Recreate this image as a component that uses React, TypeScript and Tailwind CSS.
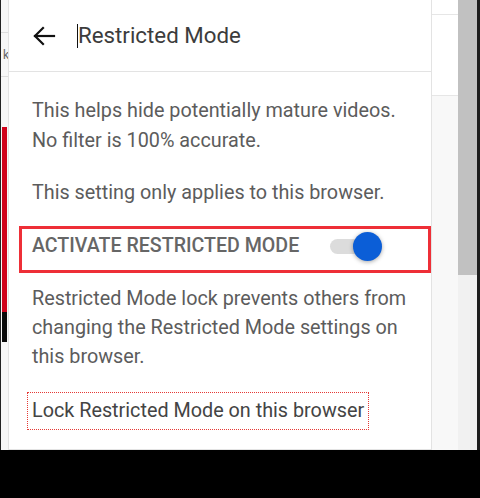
export default function App() {
  return (
    <div className="relative h-[498px] w-[480px] overflow-hidden bg-black font-['Roboto',sans-serif]">
      <div className="flex h-[450px]">
        {/* page behind, left edge */}
        <div className="flex w-[8px] shrink-0 border-l border-[#222] bg-[#f7f7f7]">
          <div className="flex w-full flex-col">
            <div className="h-[33px] border-b border-[#ddd]" />
            <div className="flex h-[44px] items-center border-b border-[#ddd] pl-[2px] text-[12px] leading-none text-[#666]">k</div>
            <div className="h-[50px]" />
            <div className="ml-[1px] mr-[1px] h-[185px] bg-[#d0021b]" />
            <div className="ml-[1px] mr-[1px] h-[30px] bg-[#0a0a0a]" />
          </div>
        </div>

        {/* restricted mode panel */}
        <div className="flex w-[424px] shrink-0 flex-col border-x border-b border-[#e3e3e3] bg-white">
          <div className="flex h-[72px] shrink-0 items-center border-b border-[#e3e3e3] pl-[23px]">
            <svg width="24" height="22" viewBox="0 0 24 22" fill="none" stroke="#111" strokeWidth="2.2" strokeLinecap="square">
              <path d="M3 11h19" />
              <path d="M11 3l-8 8 8 8" />
            </svg>
            <span className="ml-[21px] h-[24px] w-px bg-[#111]" />
            <span className="text-[22.3px] leading-none text-[#3c3c3c]">Restricted Mode</span>
          </div>

          <div className="flex flex-col pt-[24px]">
            <p className="px-[23px] text-[19.8px] leading-[30px] text-[#5c5c5c]">
              This helps hide potentially mature videos.
              <br />
              No filter is 100% accurate.
            </p>
            <p className="mt-[22px] px-[23px] text-[19.8px] leading-[30px] text-[#5c5c5c]">
              This setting only applies to this browser.
            </p>

            <div className="ml-[10px] mt-[18px] flex h-[47px] items-center border-[3px] border-[#ee2f37] pb-[7px] pl-[10px]">
              <span className="text-[19.6px] font-medium uppercase text-[#666]">Activate Restricted Mode</span>
              <div className="relative ml-[31px] h-[15px] w-[48px] rounded-full bg-[#dcdcdc]">
                <div className="absolute -top-[7px] left-[23px] h-[29px] w-[29px] rounded-full bg-[#0b5ed7] shadow-[0_1px_4px_rgba(0,0,0,0.35)]" />
              </div>
            </div>

            <p className="mt-[11px] px-[23px] text-[19.8px] leading-[29px] text-[#5c5c5c]">
              Restricted Mode lock prevents others from
              <br />
              changing the Restricted Mode settings on
              <br />
              this browser.
            </p>

            <div className="ml-[18px] mt-[21px] flex h-[38px] w-[342px] items-center border border-dotted border-[#e53935] pl-[4px]">
              <span className="whitespace-nowrap text-[19.8px] leading-none text-[#444]">Lock Restricted Mode on this browser</span>
            </div>
          </div>
        </div>

        {/* page behind, right side */}
        <div className="flex w-[26px] shrink-0 flex-col bg-white">
          <div className="h-[15px] border-b border-[#e6e6e6]" />
          <div className="h-[81px] border-b border-[#e6e6e6]" />
          <div className="flex-1 bg-[#f8f8f8]" />
        </div>

        {/* scrollbar */}
        <div className="flex w-[19px] shrink-0 flex-col bg-[#f1f1f1]">
          <div className="h-[275px] bg-[#c1c1c1]" />
        </div>
        <div className="w-[3px] shrink-0 bg-[#1e1e1e]" />
      </div>
    </div>
  );
}
